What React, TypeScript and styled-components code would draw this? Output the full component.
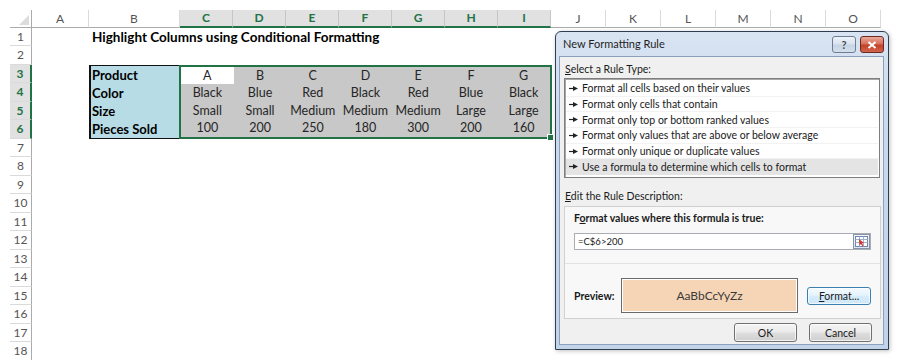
import React from 'react';
import styled, { createGlobalStyle } from 'styled-components';

// --- Global ---

const GlobalStyle = createGlobalStyle`
  html, body { margin: 0; padding: 0; background: #ffffff; }
  body { font-family: Lato, "Liberation Sans", sans-serif; }
`;

// --- Sheet ---

const Page = styled.div`
  position: relative;
  width: 900px;
  height: 360px;
  overflow: hidden;
  padding: 10px 0 0 10px;
  box-sizing: border-box;
  background: #fff;
`;

const Sheet = styled.div`
  display: grid;
  grid-template-columns: 22px 57px 91px repeat(7, 53px) repeat(6, 55px);
  grid-template-rows: 17.5px repeat(18, 18.5px);
  font-family: Lato, "Liberation Sans", sans-serif;
`;

const Corner = styled.div`
  grid-column: 1;
  grid-row: 1;
  border-right: 1px solid #ababab;
  border-bottom: 1px solid #ababab;
  box-sizing: border-box;
  display: flex;
  align-items: flex-end;
  justify-content: flex-end;
  padding: 0 2px 2px 0;
`;

const ColHeader = styled.div<{ $sel?: boolean }>`
  grid-row: 1;
  box-sizing: border-box;
  display: flex;
  align-items: center;
  justify-content: center;
  font-size: 12px;
  color: ${p => (p.$sel ? '#217346' : '#555')};
  font-weight: ${p => (p.$sel ? 700 : 400)};
  background: ${p => (p.$sel ? '#e1e1e1' : '#fff')};
  border-right: 1px solid ${p => (p.$sel ? '#c6c6c6' : '#dadada')};
  border-bottom: ${p => (p.$sel ? '2px solid #217346' : '1px solid #ababab')};
`;

const RowHeader = styled.div<{ $sel?: boolean }>`
  grid-column: 1;
  box-sizing: border-box;
  display: flex;
  align-items: center;
  justify-content: center;
  font-size: 12px;
  color: ${p => (p.$sel ? '#217346' : '#555')};
  font-weight: ${p => (p.$sel ? 700 : 400)};
  background: ${p => (p.$sel ? '#e1e1e1' : '#fff')};
  border-bottom: 1px solid #dadada;
  border-right: ${p => (p.$sel ? '2px solid #217346' : '1px solid #ababab')};
`;

const Title = styled.div`
  grid-column: 3 / 11;
  grid-row: 2;
  display: flex;
  align-items: center;
  padding-left: 3px;
  font-size: 13.5px;
  font-weight: 700;
  color: #000;
  white-space: nowrap;
`;

const LabelBlock = styled.div`
  grid-column: 3;
  grid-row: 4 / 8;
  display: grid;
  grid-template-rows: repeat(4, 1fr);
  background: #b8dce6;
  border-left: 2px solid #111;
  border-top: 1px solid #111;
  border-bottom: 1px solid #111;
  box-sizing: border-box;
`;

const LabelCell = styled.div`
  display: flex;
  align-items: center;
  padding-left: 1px;
  font-size: 13px;
  font-weight: 700;
  color: #000;
`;

const Selection = styled.div`
  grid-column: 4 / 11;
  grid-row: 4 / 8;
  position: relative;
  margin: 0 -1px 0 -1px;
  display: grid;
  grid-template-columns: repeat(7, 1fr);
  grid-template-rows: repeat(4, 1fr);
  background: #c8c8c8;
  border: 2px solid #217346;
  box-sizing: border-box;
`;

const DataCell = styled.div<{ $active?: boolean }>`
  display: flex;
  align-items: center;
  justify-content: center;
  font-size: 12.5px;
  color: #262626;
  background: ${p => (p.$active ? '#fff' : 'transparent')};
  white-space: nowrap;
`;

const FillHandle = styled.div`
  position: absolute;
  right: -4px;
  bottom: -4px;
  width: 5px;
  height: 5px;
  background: #217346;
  border: 1px solid #fff;
`;

// --- Dialog ---

const Dialog = styled.div`
  position: absolute;
  left: 555px;
  top: 31px;
  width: 334px;
  height: 319px;
  box-sizing: border-box;
  border: 1px solid #2f3e50;
  border-radius: 6px 6px 0 0;
  background: linear-gradient(180deg, #d9e4f2 0%, #c9d9ee 30%, #c2d4ea 100%);
  padding: 0 4px 4px 3px;
  display: flex;
  flex-direction: column;
  font-family: Lato, "Liberation Sans", sans-serif;
  color: #1a1a1a;
  box-shadow: 1px 1px 4px rgba(0, 0, 0, 0.25);
`;

const TitleBar = styled.div`
  height: 24px;
  display: flex;
  align-items: flex-start;
  justify-content: space-between;
  padding: 4px 0 0 4px;
  box-sizing: border-box;
`;

const TitleText = styled.span`
  font-size: 11px;
  line-height: 16px;
  color: #1e1e1e;
`;

const TitleButtons = styled.div`
  display: flex;
  gap: 4px;
`;

const CaptionButton = styled.div<{ $close?: boolean }>`
  width: 24px;
  height: 17px;
  box-sizing: border-box;
  border: 1px solid ${p => (p.$close ? '#6b2a20' : '#6f7d90')};
  border-radius: 3px;
  display: flex;
  align-items: center;
  justify-content: center;
  background: ${p =>
    p.$close
      ? 'linear-gradient(180deg, #e9a99a 0%, #d7715c 45%, #c4412a 55%, #d2654c 100%)'
      : 'linear-gradient(180deg, #eef3f9 0%, #d9e3ef 45%, #c6d4e5 55%, #d3dfec 100%)'};
  color: ${p => (p.$close ? '#fff' : '#4a4a4a')};
  font-size: 11px;
  font-weight: 700;
`;

const Body = styled.div`
  flex: 1;
  background: #f0f0f0;
  border: 1px solid #8aa0bc;
  padding: 0 3px 0 4px;
  display: flex;
  flex-direction: column;
  font-size: 10.5px;
`;

const SectionLabel = styled.div<{ $gap: number }>`
  margin-top: ${p => p.$gap}px;
  line-height: 14px;
  height: 14px;
  padding-left: 1px;
  u { text-decoration: underline; }
`;

const ListBox = styled.div`
  margin-top: 2px;
  height: 100px;
  box-sizing: border-box;
  background: #fff;
  border: 1px solid #7e7e7e;
  box-shadow: inset 1px 1px 0 #a8a8a8;
  padding: 2px 1px;
  display: flex;
  flex-direction: column;
`;

const ListItem = styled.div<{ $active?: boolean }>`
  height: 16px;
  box-sizing: border-box;
  display: flex;
  align-items: center;
  gap: 4px;
  padding-left: 3px;
  background: ${p => (p.$active ? '#e4e4e4' : '#fff')};
  border-bottom: 1px solid ${p => (p.$active ? '#e4e4e4' : '#f2f2f2')};
  white-space: nowrap;
`;

const GroupBox = styled.div`
  margin-top: 3px;
  width: 317px;
  height: 113px;
  box-sizing: border-box;
  border: 1px solid #d0d0d0;
  background: #f8f8f8;
  display: flex;
  flex-direction: column;
`;

const GroupSection = styled.div`
  padding: 4px 9px 0 9px;
`;

const BoldLabel = styled.div`
  font-weight: 700;
  line-height: 14px;
  height: 14px;
`;

const FormulaInput = styled.div`
  margin-top: 8px;
  height: 17px;
  box-sizing: border-box;
  background: #fff;
  border: 1px solid #abadb3;
  display: flex;
  align-items: center;
  justify-content: space-between;
  padding: 0 0 0 3px;
  font-size: 9.5px;
`;

const RefButton = styled.div`
  width: 17px;
  height: 15px;
  box-sizing: border-box;
  border: 1px solid #8594a8;
  background: linear-gradient(180deg, #f6f8fb, #dde5ef);
  display: flex;
  align-items: center;
  justify-content: center;
`;

const Separator = styled.div`
  margin-top: 13px;
  height: 1px;
  background: #e2e2e2;
`;

const PreviewRow = styled.div`
  margin-top: 14px;
  padding: 0 9px;
  display: flex;
  align-items: center;
`;

const PreviewLabel = styled.div`
  width: 47px;
  font-weight: 700;
`;

const PreviewBox = styled.div`
  width: 177px;
  height: 35px;
  box-sizing: border-box;
  border: 1px solid #6a6a6a;
  padding: 1px;
  background: #fff;
`;

const PreviewFill = styled.div`
  height: 100%;
  background: #f6d5b7;
  display: flex;
  align-items: center;
  justify-content: center;
  font-size: 12px;
  color: #3a3a3a;
`;

const Button = styled.div<{ $default?: boolean; $w: number }>`
  width: ${p => p.$w}px;
  height: ${p => (p.$default ? 18 : 19)}px;
  box-sizing: border-box;
  border: 1px solid ${p => (p.$default ? '#3c7fb1' : '#707070')};
  border-radius: 3px;
  background: ${p =>
    p.$default
      ? 'linear-gradient(180deg, #f4fafe 0%, #e5f3fc 45%, #d3ebfa 55%, #cfe8f8 100%)'
      : 'linear-gradient(180deg, #f4f4f4 0%, #ebebeb 45%, #dddddd 55%, #cfcfcf 100%)'};
  box-shadow: inset 0 0 0 1px rgba(255, 255, 255, 0.7);
  display: flex;
  align-items: center;
  justify-content: center;
  u { text-decoration: underline; }
`;

const FormatButton = styled(Button)`
  margin-left: 9px;
`;

const Footer = styled.div`
  margin-top: 4px;
  padding-right: 8px;
  display: flex;
  justify-content: flex-end;
  gap: 12px;
`;

// --- Icons ---

const Arrow = () => (
  <svg width="9" height="5" viewBox="0 0 9 5">
    <path d="M0 2.5H5" stroke="#222" strokeWidth="1.2" />
    <path d="M4 0L9 2.5L4 5Z" fill="#222" />
  </svg>
);

const RefIcon = () => (
  <svg width="13" height="11" viewBox="0 0 13 11">
    <rect x="0.5" y="0.5" width="12" height="10" fill="#fff" stroke="#6b86b3" />
    <path d="M0.5 3.5H12.5M0.5 6.5H12.5M4.5 0.5V10.5M8.5 0.5V10.5" stroke="#9fb3d3" />
    <path d="M4 3L9 7L7 7.5L8.5 10L7.5 10.5L6 8L4.5 9.5Z" fill="#d6312a" />
  </svg>
);

// --- Data ---

const columns = ['A', 'B', 'C', 'D', 'E', 'F', 'G', 'H', 'I', 'J', 'K', 'L', 'M', 'N', 'O'];
const selCols = ['C', 'D', 'E', 'F', 'G', 'H', 'I'];
const labels = ['Product', 'Color', 'Size', 'Pieces Sold'];
const data = [
  ['A', 'B', 'C', 'D', 'E', 'F', 'G'],
  ['Black', 'Blue', 'Red', 'Black', 'Red', 'Blue', 'Black'],
  ['Small', 'Small', 'Medium', 'Medium', 'Medium', 'Large', 'Large'],
  ['100', '200', '250', '180', '300', '200', '160'],
];
const ruleTypes = [
  'Format all cells based on their values',
  'Format only cells that contain',
  'Format only top or bottom ranked values',
  'Format only values that are above or below average',
  'Format only unique or duplicate values',
  'Use a formula to determine which cells to format',
];

const App = () => {
  return (
    <Page>
      <GlobalStyle />
      <Sheet>
        <Corner>
          <svg width="10" height="10" viewBox="0 0 10 10">
            <path d="M10 0V10H0Z" fill="#dcdcdc" />
          </svg>
        </Corner>
        {columns.map(c => (
          <ColHeader key={c} $sel={selCols.includes(c)}>{c}</ColHeader>
        ))}
        {Array.from({ length: 18 }, (_, i) => (
          <RowHeader key={i} $sel={i >= 2 && i <= 5} style={{ gridRow: i + 2 }}>
            {i + 1}
          </RowHeader>
        ))}

        <Title>Highlight Columns using Conditional Formatting</Title>

        <LabelBlock>
          {labels.map(l => (
            <LabelCell key={l}>{l}</LabelCell>
          ))}
        </LabelBlock>

        <Selection>
          {data.map((row, r) =>
            row.map((v, c) => (
              <DataCell key={`${r}-${c}`} $active={r === 0 && c === 0}>{v}</DataCell>
            ))
          )}
          <FillHandle />
        </Selection>
      </Sheet>

      <Dialog>
        <TitleBar>
          <TitleText>New Formatting Rule</TitleText>
          <TitleButtons>
            <CaptionButton>?</CaptionButton>
            <CaptionButton $close>
              <svg width="10" height="8" viewBox="0 0 10 8">
                <path d="M1.5 1L8.5 7M8.5 1L1.5 7" stroke="#fff" strokeWidth="2" />
              </svg>
            </CaptionButton>
          </TitleButtons>
        </TitleBar>
        <Body>
          <SectionLabel $gap={5}><u>S</u>elect a Rule Type:</SectionLabel>
          <ListBox>
            {ruleTypes.map((t, i) => (
              <ListItem key={t} $active={i === ruleTypes.length - 1}>
                <Arrow />
                <span>{t}</span>
              </ListItem>
            ))}
          </ListBox>
          <SectionLabel $gap={11}><u>E</u>dit the Rule Description:</SectionLabel>
          <GroupBox>
            <GroupSection>
              <BoldLabel>F<u>o</u>rmat values where this formula is true:</BoldLabel>
              <FormulaInput>
                <span>=C$6&gt;200</span>
                <RefButton>
                  <RefIcon />
                </RefButton>
              </FormulaInput>
            </GroupSection>
            <Separator />
            <PreviewRow>
              <PreviewLabel>Preview:</PreviewLabel>
              <PreviewBox>
                <PreviewFill>AaBbCcYyZz</PreviewFill>
              </PreviewBox>
              <FormatButton $default $w={64}><span><u>F</u>ormat...</span></FormatButton>
            </PreviewRow>
          </GroupBox>
          <Footer>
            <Button $w={63}>OK</Button>
            <Button $w={63}>Cancel</Button>
          </Footer>
        </Body>
      </Dialog>
    </Page>
  );
};

export default App;
